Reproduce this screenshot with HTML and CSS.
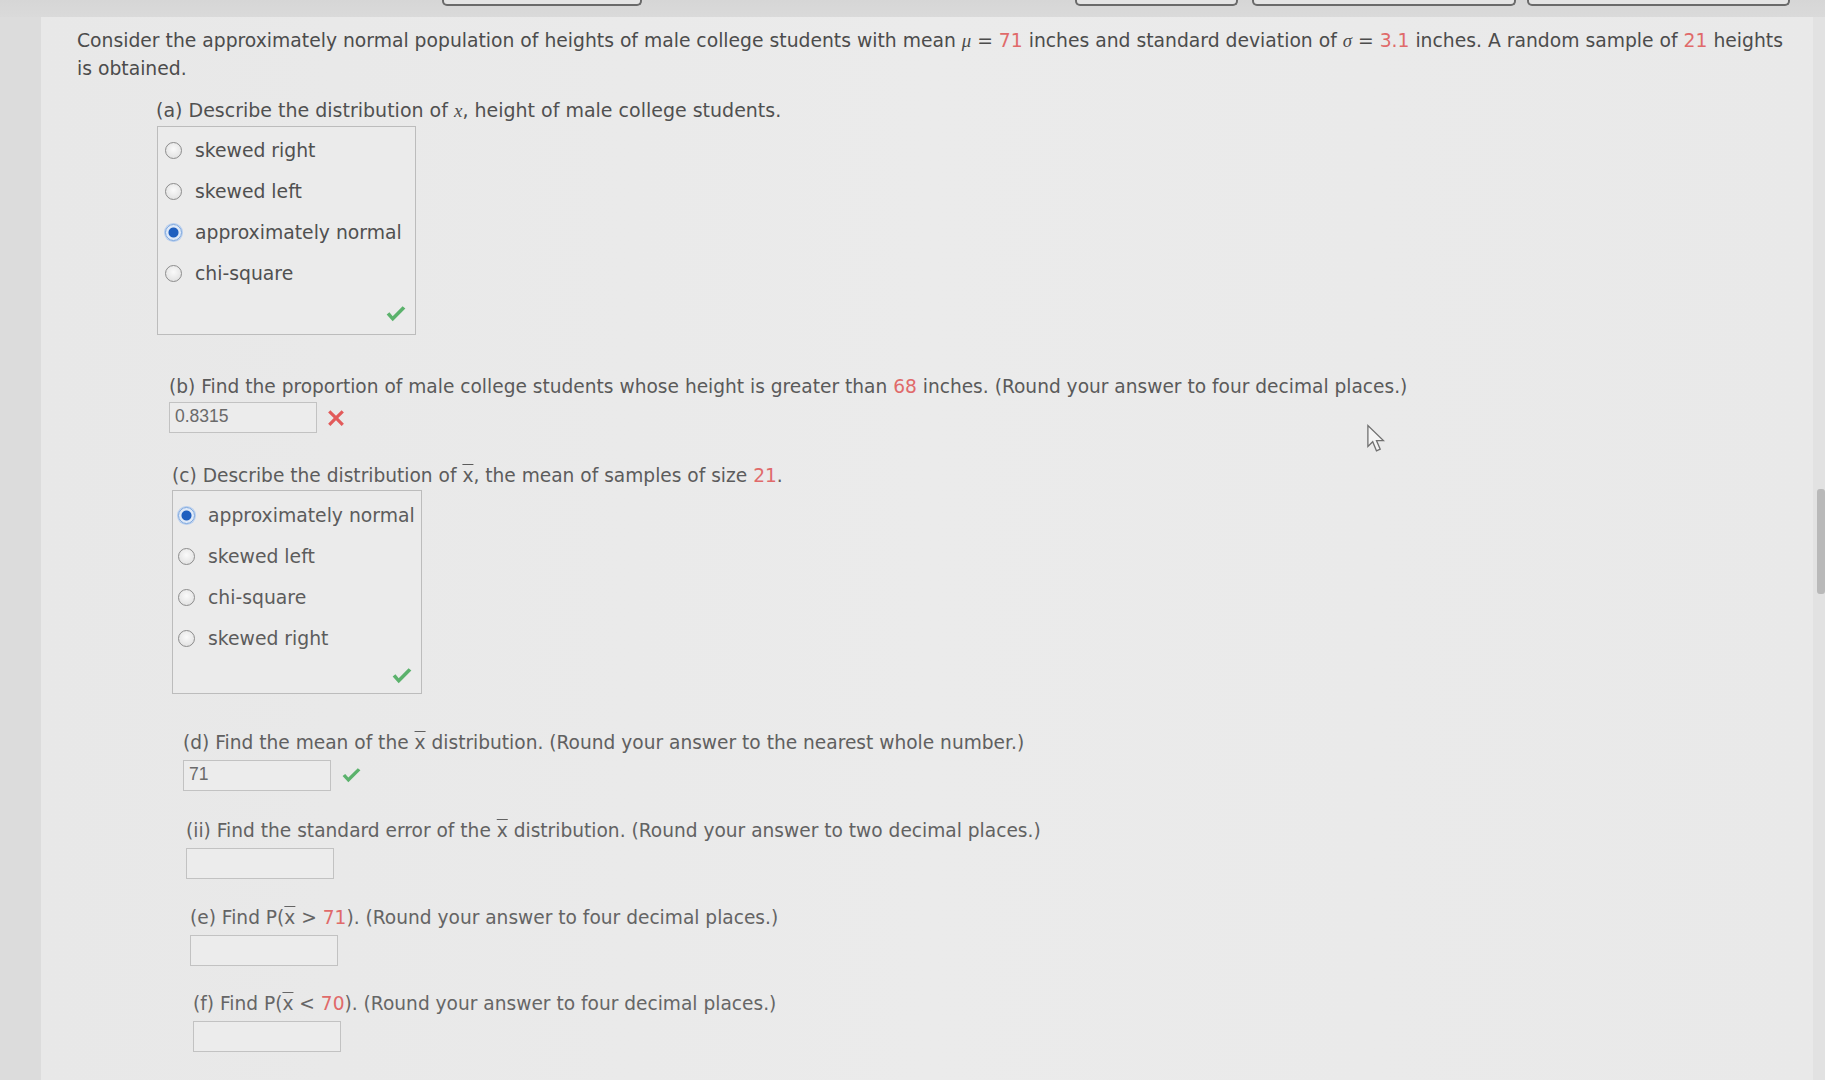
FILE: index.html
```html
<!DOCTYPE html>
<html>
<head>
<meta charset="utf-8">
<link rel="stylesheet" href="styles.css">
</head>
<body>
<div class="topbar">
  <div class="tab t1"></div>
  <div class="tab t2"></div>
  <div class="tab t3"></div>
  <div class="tab t4"></div>
</div>
<div class="frame">
  <div class="panel">
    <p class="intro">Consider the approximately normal population of heights of male college students with mean <i class="sym">μ</i> = <span class="red">71</span> inches and standard deviation of <i class="sym">σ</i> = <span class="red">3.1</span> inches. A random sample of <span class="red">21</span> heights is obtained.</p>

    <section class="part pa">
      <div class="label">(a) Describe the distribution of <i class="var">x</i>, height of male college students.</div>
      <div class="choices ca">
        <div class="opt"><span class="radio"></span>skewed right</div>
        <div class="opt"><span class="radio"></span>skewed left</div>
        <div class="opt"><span class="radio on"></span>approximately normal</div>
        <div class="opt"><span class="radio"></span>chi-square</div>
        <div class="mark-row"><svg class="check" viewBox="0 0 20 16"><path d="M1.5 8.5 L7 14.5 L18.5 3 L16 1 L7 10 L4 6.5 Z"/></svg></div>
      </div>
    </section>

    <section class="part pb">
      <div class="label">(b) Find the proportion of male college students whose height is greater than <span class="red">68</span> inches. (Round your answer to four decimal places.)</div>
      <div class="answer">
        <div class="input">0.8315</div>
        <svg class="cross" viewBox="0 0 16 16"><path d="M3 1 L8 6 L13 1 L15 3 L10 8 L15 13 L13 15 L8 10 L3 15 L1 13 L6 8 L1 3 Z"/></svg>
      </div>
    </section>

    <section class="part pc">
      <div class="label">(c) Describe the distribution of <span class="xbar">x</span>, the mean of samples of size <span class="red">21</span>.</div>
      <div class="choices cc">
        <div class="opt"><span class="radio on"></span>approximately normal</div>
        <div class="opt"><span class="radio"></span>skewed left</div>
        <div class="opt"><span class="radio"></span>chi-square</div>
        <div class="opt"><span class="radio"></span>skewed right</div>
        <div class="mark-row"><svg class="check" viewBox="0 0 20 16"><path d="M1.5 8.5 L7 14.5 L18.5 3 L16 1 L7 10 L4 6.5 Z"/></svg></div>
      </div>
    </section>

    <section class="part pd">
      <div class="label">(d) Find the mean of the <span class="xbar">x</span> distribution. (Round your answer to the nearest whole number.)</div>
      <div class="answer">
        <div class="input">71</div>
        <svg class="check small" viewBox="0 0 20 16"><path d="M1.5 8.5 L7 14.5 L18.5 3 L16 1 L7 10 L4 6.5 Z"/></svg>
      </div>
    </section>

    <section class="part pii">
      <div class="label">(ii) Find the standard error of the <span class="xbar">x</span> distribution. (Round your answer to two decimal places.)</div>
      <div class="answer"><div class="input"></div></div>
    </section>

    <section class="part pe">
      <div class="label">(e) Find P(<span class="xbar">x</span> &gt; <span class="red">71</span>). (Round your answer to four decimal places.)</div>
      <div class="answer"><div class="input"></div></div>
    </section>

    <section class="part pf">
      <div class="label">(f) Find P(<span class="xbar">x</span> &lt; <span class="red">70</span>). (Round your answer to four decimal places.)</div>
      <div class="answer"><div class="input"></div></div>
    </section>
  </div>
  <div class="scrollbar"><div class="thumb"></div></div>
</div>
<svg class="cursor" viewBox="0 0 20 28"><path d="M1.5 1.5 L1.5 21 L6 16.5 L9.5 25 L13 23.5 L9.5 15.5 L16 15.5 Z"/></svg>
</body>
</html>
```
FILE: styles.css
```css
html, body {
  margin: 0;
  padding: 0;
}
body {
  width: 1825px;
  height: 1080px;
  overflow: hidden;
  background: #dcdcdc;
  font-family: "DejaVu Sans", Verdana, sans-serif;
  color: #555;
  position: relative;
}
.topbar {
  height: 17px;
  display: flex;
  align-items: flex-start;
  background: linear-gradient(#d6d6d6, #dadada);
}
.tab {
  height: 4px;
  border: 2px solid #6a6a6a;
  border-top: none;
  border-radius: 0 0 5px 5px;
  background: #e4e4e4;
}
.t1 { margin-left: 442px; width: 196px; }
.t2 { margin-left: 433px; width: 159px; }
.t3 { margin-left: 14px; width: 260px; }
.t4 { margin-left: 11px; width: 259px; }

.frame {
  display: flex;
  height: 1063px;
}
.panel {
  margin-left: 41px;
  width: 1772px;
  background: linear-gradient(90deg, #e8e8e8 0%, #ebebeb 50%, #e9e9e9 100%);
  padding-top: 10px;
  box-sizing: border-box;
}
.scrollbar {
  width: 12px;
  background: #e2e2e2;
}
.thumb {
  margin-top: 472px;
  margin-left: 4px;
  width: 8px;
  height: 105px;
  background: #b9b9b9;
  border-radius: 3px;
}

.intro {
  margin: 0 0 0 36px;
  width: 1714px;
  font-size: 18.75px;
  line-height: 28px;
  color: #4c4c4c;
}
.red { color: #e06a6a; }
.sym, .var {
  font-family: "Liberation Serif", "DejaVu Serif", serif;
  font-style: italic;
}
.xbar {
  font-family: "DejaVu Sans", sans-serif;
  text-decoration: overline;
}

.part { font-size: 18.6px; }
.label { line-height: 22px; white-space: nowrap; }
.pa { margin: 16px 0 0 115px; color: #505050; font-size: 19px; }
.pb { margin: 41px 0 0 128px; color: #5a5a5a; }
.pc { margin: 32px 0 0 131px; color: #5c5c5c; }
.pd { margin: 38px 0 0 142px; color: #606060; }
.pii { margin: 29px 0 0 145px; color: #626262; }
.pe { margin: 28px 0 0 149px; color: #646464; }
.pf { margin: 27px 0 0 152px; color: #666; }

.choices {
  margin-top: 4px;
  border: 1px solid #bcbcbc;
  background: #ebebeb;
  box-sizing: border-box;
  display: flex;
  flex-direction: column;
  font-size: 18.8px;
}
.ca { width: 259px; height: 209px; padding: 3px 0 0 7px; margin-left: 1px; }
.cc { width: 250px; height: 204px; padding: 4px 0 0 5px; margin-top: 3px; }
.opt {
  height: 41px;
  display: flex;
  align-items: center;
  gap: 13px;
  white-space: nowrap;
}
.radio {
  width: 15px;
  height: 15px;
  border: 1.5px solid #8c8c8c;
  border-radius: 50%;
  background: radial-gradient(circle at 50% 40%, #fafafa, #dcdcdc);
  flex: none;
}
.radio.on {
  border-color: #7aa6df;
  background: radial-gradient(circle, #1f5fbf 0 4.5px, #dfe9f7 5.5px);
  box-shadow: 0 0 0 1px #b5cdef;
}
.mark-row {
  flex: 1;
  display: flex;
  justify-content: flex-end;
  align-items: center;
  padding-right: 8px;
}
.check {
  width: 22px;
  height: 18px;
  fill: #5bb26c;
}
.check.small { width: 21px; height: 17px; }

.answer {
  display: flex;
  align-items: center;
  gap: 10px;
  margin-top: 6px;
}
.pb .answer { margin-top: 4px; }
.input {
  width: 148px;
  height: 31px;
  box-sizing: border-box;
  border: 1px solid #c2c2c2;
  background: #ececec;
  font-family: "Liberation Sans", Arial, sans-serif;
  font-size: 17.5px;
  color: #6a6a6a;
  padding: 3px 5px 0;
}
.cross {
  width: 18px;
  height: 18px;
  fill: #e25a5a;
}
.cursor {
  position: absolute;
  left: 1366px;
  top: 424px;
  width: 22px;
  height: 30px;
  fill: #f4f4f4;
  stroke: #707070;
  stroke-width: 1.2;
}
```
